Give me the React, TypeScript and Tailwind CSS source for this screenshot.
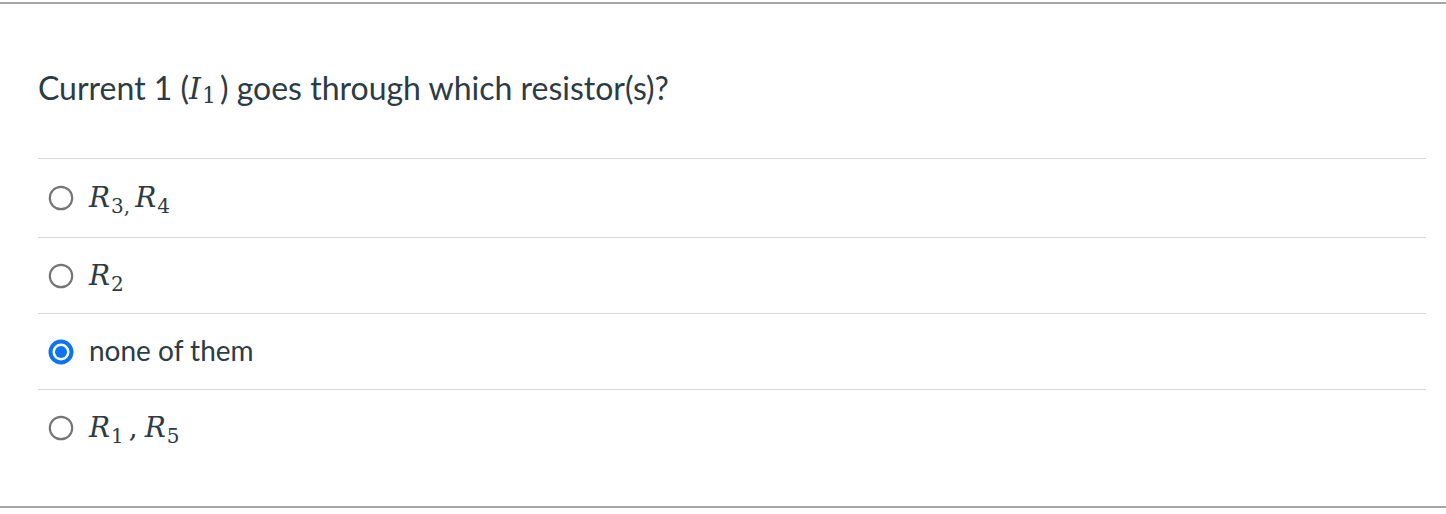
import React from "react";

const mathFont = "font-['DejaVu_Serif',serif]";

function Radio({ checked }: { checked?: boolean }) {
  if (checked) {
    return (
      <svg width="26" height="26" viewBox="0 0 26 26" className="shrink-0" aria-hidden="true">
        <circle cx="13" cy="13" r="10.5" fill="none" stroke="#0b74f4" strokeWidth="4" />
        <circle cx="13" cy="13" r="6" fill="#0b74f4" />
      </svg>
    );
  }
  return (
    <svg width="26" height="26" viewBox="0 0 26 26" className="shrink-0" aria-hidden="true">
      <circle cx="13" cy="13" r="11.2" fill="none" stroke="#767676" strokeWidth="2.2" />
    </svg>
  );
}

function R({ sub, comma }: { sub: string; comma?: boolean }) {
  return (
    <span className="inline-flex items-baseline">
      <span className="italic">R</span>
      <span className="relative top-[6px] ml-[1px] text-[20px] leading-none">
        {sub}
        {comma ? "," : null}
      </span>
    </span>
  );
}

const options = [
  {
    id: "a",
    h: "h-[79px]",
    label: (
      <span className={`${mathFont} text-[28px] text-[#2d3b45]`}>
        <R sub="3" comma />
        <span className="ml-[5px]">
          <R sub="4" />
        </span>
      </span>
    ),
  },
  {
    id: "b",
    h: "h-[76px]",
    label: (
      <span className={`${mathFont} text-[28px] text-[#2d3b45]`}>
        <R sub="2" />
      </span>
    ),
  },
  {
    id: "c",
    h: "h-[76px]",
    checked: true,
    label: <span className="relative -top-[2px] text-[28px] text-[#2d3b45]">none of them</span>,
  },
  {
    id: "d",
    h: "h-[76px]",
    label: (
      <span className={`${mathFont} text-[28px] text-[#2d3b45]`}>
        <R sub="1" />
        <span className="ml-[5px] mr-[7px]">,</span>
        <R sub="5" />
      </span>
    ),
  },
];

export default function App() {
  return (
    <div className="h-[514px] w-[1446px] bg-white pt-[2px] font-['Lato',sans-serif]">
      <div className="h-[506px] border-y-2 border-[#a6a6a6]">
        <div className="pl-[38px] pr-[20px]">
          <p className="flex h-[154px] items-center pt-[14px] text-[32px] text-[#2d3b45]">
            Current 1 (
            <span className={`${mathFont} italic text-[30px]`}>I</span>
            <span className={`${mathFont} relative top-[7px] ml-[1px] text-[22px]`}>1</span>
            <span className="ml-[4px]">) goes through which resistor(s)?</span>
          </p>
          <ul>
            {options.map((o) => (
              <li
                key={o.id}
                className={`flex items-center gap-[15px] border-t border-[#d9d9d9] pl-[10px] ${o.h}`}
              >
                <Radio checked={o.checked} />
                {o.label}
              </li>
            ))}
          </ul>
        </div>
      </div>
    </div>
  );
}
